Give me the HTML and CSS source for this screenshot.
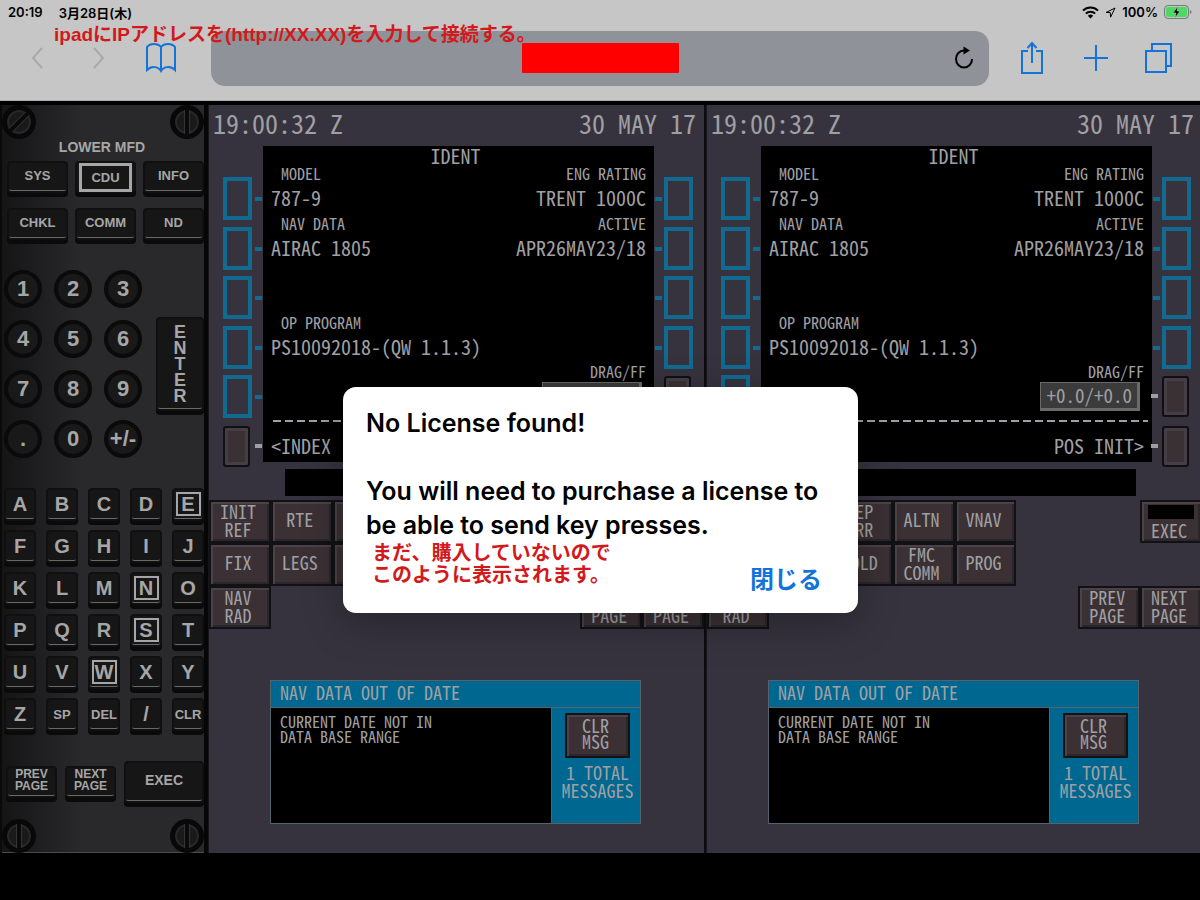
FILE: index.html
```html
<!DOCTYPE html>
<html lang="ja">
<head>
    <meta charset="UTF-8">
    <meta name="viewport" content="width=device-width, initial-scale=1.0">
    <title>CDU</title>
    <link rel="stylesheet" href="styles.css">
</head>
<body>

    <!-- Browser bar -->
    <header class="browser">
        <div class="status">
            <span>20:19</span>
            <span>3月28日(木)</span>
            <span class="status-right">
                <svg width="17" height="13" viewBox="0 0 17 13" fill="none" stroke="#000" stroke-width="2">
                    <path d="M1 4.6a10.6 10.6 0 0 1 15 0M3.8 7.6a6.6 6.6 0 0 1 9.4 0"/>
                    <path d="M8.500 12.500L5.800 9.800a3.800 3.800 0 0 1 5.400 0z" fill="#000" stroke="none"/>
                </svg>
                <svg width="11" height="11" viewBox="0 0 11 11" fill="none" stroke="#000" stroke-linejoin="round">
                    <path d="M10 1L1 5.500h4.200l.4 4.700z"/>
                </svg>
                <span>100%</span>
                <svg width="28" height="14" viewBox="0 0 28 14">
                    <rect x=".5" y=".5" width="24" height="13" rx="3.500" fill="none" stroke="#777"/>
                    <rect x="2" y="2" width="21" height="10" rx="2" fill="#4cd964"/>
                    <path d="M26 5v4q1.500-.5 1.500-2T26 5z" fill="#777"/>
                    <path d="M14 1L9 8h3l-1 5 5-7h-3z" fill="#000" stroke="#c6c6c6" stroke-width=".6"/>
                </svg>
            </span>
        </div>
        <div class="toolbar">
            <div class="tools tools-left">
                <button class="tool off" aria-label="戻る">
                    <svg width="14" height="24" viewBox="0 0 14 24"><path d="M12 2L3 12l9 10"/></svg>
                </button>
                <button class="tool off" aria-label="進む">
                    <svg width="14" height="24" viewBox="0 0 14 24"><path d="M2 2l9 10-9 10"/></svg>
                </button>
                <button class="tool" aria-label="ブックマーク">
                    <svg width="32" height="32" viewBox="0 0 32 32"><path d="M16 5C13 1 5 1 2 5v23c4-4 11-4 14 1 3-5 10-5 14-1V5C27 1 19 1 16 5z"/><path d="M16 5v24"/></svg>
                </button>
            </div>
            <div class="address">
                <input type="text" class="address-input" aria-label="アドレス">
                <span class="redacted"></span>
                <button class="reload" aria-label="再読み込み">
                    <svg width="20" height="24" viewBox="0 0 20 24"><path d="M18 13a8 8.500 0 1 1-8-8.500" fill="none" stroke="#000" stroke-width="2"/><path d="M9.500.5L16 4.600l-6.500 4z"/></svg>
                </button>
            </div>
            <div class="tools tools-right">
                <button class="tool" aria-label="共有">
                    <svg width="26" height="34" viewBox="0 0 26 34"><path d="M9 10H3v22h20V10h-6M13 22V2M8.500 7L13 2l4.500 5"/></svg>
                </button>
                <button class="tool" aria-label="新規タブ">
                    <svg width="26" height="26" viewBox="0 0 26 26"><path d="M13 0v26M1 13h24"/></svg>
                </button>
                <button class="tool" aria-label="タブ一覧">
                    <svg width="32" height="32" viewBox="0 0 32 32"><path d="M2 9h20v21H2zM8 9V2h19v22h-5"/></svg>
                </button>
            </div>
        </div>
        <p class="note note-top">ipadにIPアドレスを(http://XX.XX)を入力して接続する。</p>
    </header>

    <main class="deck">

        <!-- Keypad panel -->
        <section class="mfd">
            <div class="screws"><i class="screw tilt"></i><i class="screw"></i></div>
            <h2 class="mfd-title">LOWER MFD</h2>
            <div class="pages">
                <button class="key">SYS</button>
                <button class="key active"><span>CDU</span></button>
                <button class="key">INFO</button>
                <button class="key">CHKL</button>
                <button class="key">COMM</button>
                <button class="key">ND</button>
            </div>
            <div class="numbers">
                <div class="digits">
                    <button class="digit">1</button>
                    <button class="digit">2</button>
                    <button class="digit">3</button>
                    <button class="digit">4</button>
                    <button class="digit">5</button>
                    <button class="digit">6</button>
                    <button class="digit">7</button>
                    <button class="digit">8</button>
                    <button class="digit">9</button>
                    <button class="digit">.</button>
                    <button class="digit">0</button>
                    <button class="digit">+/-</button>
                </div>
                <button class="key enter">E<br>N<br>T<br>E<br>R</button>
            </div>
            <div class="letters">
                <button class="key">A</button>
                <button class="key">B</button>
                <button class="key">C</button>
                <button class="key">D</button>
                <button class="key boxed"><span>E</span></button>
                <button class="key">F</button>
                <button class="key">G</button>
                <button class="key">H</button>
                <button class="key">I</button>
                <button class="key">J</button>
                <button class="key">K</button>
                <button class="key">L</button>
                <button class="key">M</button>
                <button class="key boxed"><span>N</span></button>
                <button class="key">O</button>
                <button class="key">P</button>
                <button class="key">Q</button>
                <button class="key">R</button>
                <button class="key boxed"><span>S</span></button>
                <button class="key">T</button>
                <button class="key">U</button>
                <button class="key">V</button>
                <button class="key boxed"><span>W</span></button>
                <button class="key">X</button>
                <button class="key">Y</button>
                <button class="key">Z</button>
                <button class="key small">SP</button>
                <button class="key small">DEL</button>
                <button class="key">/</button>
                <button class="key small">CLR</button>
            </div>
            <div class="paging">
                <button class="key">PREV<br>PAGE</button>
                <button class="key">NEXT<br>PAGE</button>
                <button class="key exec">EXEC</button>
            </div>
            <div class="screws bottom"><i class="screw"></i><i class="screw"></i></div>
        </section>

        <!-- CDU, the second one is cloned from this -->
        <section class="cdu">
            <div class="clock"><span>19:00:32 Z</span><span>30 MAY 17</span></div>
            <div class="unit">
                <div class="lsks">
                    <button class="lsk" aria-label="L1"></button>
                    <button class="lsk" aria-label="L2"></button>
                    <button class="lsk" aria-label="L3"></button>
                    <button class="lsk" aria-label="L4"></button>
                    <button class="lsk" aria-label="L5"></button>
                    <button class="lsk on" aria-label="L6"></button>
                </div>
                <div class="screen">
                    <h3 class="screen-title">IDENT</h3>
                    <div class="lines">
                        <div class="line label"><span>MODEL</span><span>ENG RATING</span></div>
                        <div class="line"><span>787-9</span><span>TRENT 1000C</span></div>
                        <div class="line label"><span>NAV DATA</span><span>ACTIVE</span></div>
                        <div class="line"><span>AIRAC 1805</span><span>APR26MAY23/18</span></div>
                        <div class="line"></div>
                        <div class="line"></div>
                        <div class="line label"><span>OP PROGRAM</span></div>
                        <div class="line"><span>PS10092018-(QW 1.1.3)</span></div>
                        <div class="line label"><span></span><span>DRAG/FF</span></div>
                        <div class="line"><span></span><span class="field">+0.0/+0.0</span></div>
                        <div class="line"><hr class="dashes"></div>
                        <div class="line"><span>&lt;INDEX</span><span>POS INIT&gt;</span></div>
                    </div>
                </div>
                <div class="lsks right">
                    <button class="lsk" aria-label="R1"></button>
                    <button class="lsk" aria-label="R2"></button>
                    <button class="lsk" aria-label="R3"></button>
                    <button class="lsk" aria-label="R4"></button>
                    <button class="lsk on" aria-label="R5"></button>
                    <button class="lsk on" aria-label="R6"></button>
                </div>
            </div>
            <div class="scratchpad"></div>
            <div class="soft-keys">
                <button class="soft">INIT<br>REF</button>
                <button class="soft">RTE</button>
                <button class="soft">DEP<br>ARR</button>
                <button class="soft">ALTN</button>
                <button class="soft">VNAV</button>
                <button class="soft soft-exec"><i class="lamp"></i>EXEC</button>
                <button class="soft first">FIX</button>
                <button class="soft">LEGS</button>
                <button class="soft">HOLD</button>
                <button class="soft">FMC<br>COMM</button>
                <button class="soft">PROG</button>
                <button class="soft first">NAV<br>RAD</button>
                <button class="soft prev">PREV<br>PAGE</button>
                <button class="soft">NEXT<br>PAGE</button>
            </div>
            <div class="message">
                <h4 class="message-title">NAV DATA OUT OF DATE</h4>
                <p class="message-text">CURRENT DATE NOT IN<br>DATA BASE RANGE</p>
                <div class="message-side">
                    <button class="soft clr">CLR<br>MSG</button>
                    <p>1 TOTAL<br>MESSAGES</p>
                </div>
            </div>
        </section>

    </main>

    <div class="alert" role="alertdialog" aria-label="No License found!">
        <p class="alert-text">No License found!</p>
        <p class="alert-text">You will need to purchase a license to be able to send key presses.</p>
        <p class="note note-alert">まだ、購入していないので<br>このように表示されます。</p>
        <button class="alert-close">閉じる</button>
    </div>

    <script>
        const cdu = document.querySelector('.cdu');
        cdu.after(cdu.cloneNode(true));

        const closeButton = document.querySelector('.alert-close');
        closeButton.addEventListener('click', () => {
            closeButton.parentElement.remove();
        });
    </script>

</body>
</html>
```

FILE: styles.css
```css
* {
    margin: 0;
    padding: 0;
    box-sizing: border-box;
}

body {
    position: relative;
    min-height: 100vh;
    background-color: #000;
    font-family: Inter, "Noto Sans CJK JP", sans-serif;
    overflow-x: hidden;
}

button {
    border: none;
    background: none;
    color: inherit;
    font: inherit;
    cursor: pointer;
}

/* Browser bar */
.browser {
    position: relative;
    height: 101px;
    background-color: #c6c6c6;
    border-bottom: 1px solid #a8acac;
}

.status {
    display: flex;
    align-items: center;
    gap: 16px;
    height: 24px;
    padding: 0 8px;
    font-size: 13px;
    font-weight: 600;
}

.status-right {
    display: flex;
    align-items: center;
    gap: 6px;
    margin-left: auto;
}

.toolbar {
    display: flex;
    align-items: center;
    height: 68px;
    padding: 0 8px 0 6px;
}

.tools {
    display: flex;
}

.tools-left {
    margin-right: 19px;
}

.tools-right {
    margin-left: 11px;
}

.tool {
    display: flex;
    justify-content: center;
    align-items: center;
    width: 62px;
    height: 44px;
    fill: none;
    stroke: #1273d8;
    stroke-width: 2;
}

.tools-right .tool {
    width: 64px;
}

.tool.off {
    stroke: #a9a9ab;
}

.address {
    position: relative;
    display: flex;
    align-items: center;
    flex: 1;
    height: 55px;
    padding-right: 15px;
    border-radius: 14px;
    background-color: #8f9299;
}

.address-input {
    flex: 1;
    min-width: 0;
    height: 40px;
    border: none;
    outline: none;
    background: transparent;
}

.redacted {
    position: absolute;
    left: 40%;
    width: 157px;
    height: 30px;
    border-radius: 1px;
    background-color: #f00;
}

.reload {
    display: flex;
}

.note {
    color: #d2191b;
    font-family: "Liberation Sans", "Noto Sans CJK JP", sans-serif;
    font-weight: 700;
}

.note-top {
    position: absolute;
    top: 22px;
    left: 54px;
    font-size: 19px;
    line-height: 26px;
    white-space: nowrap;
}

/* Flight deck */
.deck {
    display: grid;
    grid-template-columns: 208px 1fr 1fr;
    height: 752px;
    margin-right: -4px;
    padding-top: 4px;
}

.mfd {
    display: flex;
    flex-direction: column;
    padding: 0 2px 0 6px;
    border-right: 4px solid #060606;
    border-left: 2px solid #0a0a0b;
    background: linear-gradient(90deg, #151516, #29282b 40%, #29282b);
    color: #a6a6a6;
    font-family: "Liberation Sans", sans-serif;
    font-weight: 700;
}

.screws {
    display: flex;
    justify-content: space-between;
    height: 34px;
    margin: 0 -2px 0 -6px;
}

.screw {
    display: flex;
    justify-content: center;
    width: 34px;
    height: 34px;
    border: 5px solid #080808;
    border-radius: 50%;
    background-color: #1a1a1b;
    box-shadow: inset 0 0 0 2px #28282a;
}

.screw::before {
    content: "";
    width: 4px;
    height: 24px;
    border-right: 1px solid #343436;
    border-left: 1px solid #343436;
    background-color: #0a0a0a;
}

.screw.tilt::before {
    transform: rotate(45deg);
}

.mfd-title {
    height: 18px;
    padding-right: 6px;
    font-size: 14px;
    line-height: 16px;
    text-align: center;
}

.key {
    border-bottom: 1px solid #6c6866;
    border-radius: 2px;
    background-color: #161617;
    box-shadow: 0 0 0 2px #101011, 0 4px 0 2px #0a0a0a;
    line-height: 1;
}

.pages {
    display: grid;
    grid-template-columns: repeat(3, 1fr);
    grid-auto-rows: 28px;
    gap: 19px 11px;
    padding: 6px 0 0 1px;
    font-size: 13px;
}

.pages .key {
    padding-bottom: 2px;
}

.pages .active {
    padding: 0;
    border-bottom: none;
}

.active span {
    display: block;
    margin: 0 2px;
    padding: 5px 0;
    border: 3px solid #a6a6a6;
}

.numbers {
    display: flex;
    justify-content: space-between;
    align-items: center;
    padding-top: 32px;
}

.digits {
    display: grid;
    grid-template-columns: repeat(3, 38px);
    gap: 12px;
    margin-left: -4px;
    font-size: 22px;
}

.digit {
    display: flex;
    justify-content: center;
    align-items: center;
    height: 38px;
    border: 4px solid #0a0a0a;
    border-radius: 50%;
    background-color: #191919;
    line-height: 1;
    white-space: nowrap;
}

.enter {
    width: 44px;
    height: 90px;
    font-size: 18px;
    line-height: 16px;
}

.letters {
    display: grid;
    grid-template-columns: repeat(5, 28px);
    grid-auto-rows: 29px;
    justify-content: space-between;
    row-gap: 13px;
    margin-left: -2px;
    padding-top: 32px;
    font-size: 20px;
}

.boxed span {
    display: block;
    width: 25px;
    margin: 0 auto;
    border: 2px solid #a6a6a6;
}

.key.small {
    font-size: 13px;
}

.paging {
    display: grid;
    grid-template-columns: 47px 47px 1fr;
    align-items: center;
    gap: 12px;
    margin-top: 34px;
    font-size: 12px;
}

.paging .key {
    height: 28px;
    padding-bottom: 3px;
    line-height: 12px;
}

.paging .exec {
    height: 38px;
    font-size: 14px;
}

.bottom {
    margin-top: auto;
    border-bottom: 1px solid #4a4a4a;
}

/* CDU */
.cdu {
    border-right: 2px solid #0c0c10;
    border-left: 1px solid #17161b;
    background-color: #36333e;
    color: #a0a0a4;
    font-family: "Noto Sans CJK JP", sans-serif;
    font-feature-settings: "hwid";
}

.clock {
    display: flex;
    justify-content: space-between;
    height: 41px;
    padding: 0 8px 0 4px;
    font-size: 26px;
    line-height: 36px;
}

.unit {
    display: grid;
    grid-template-columns: 54px 1fr 50px;
}

.lsks {
    display: grid;
    grid-template-rows: repeat(6, 1fr);
    align-items: center;
    height: 297px;
    margin: 28px 0 -9px;
}

.lsk {
    position: relative;
    width: 29px;
    height: 43px;
    margin-left: 14px;
    border: 4px solid #126a91;
}

.right .lsk {
    margin-left: 10px;
}

/* tick between the key and the screen */
.lsk::after {
    content: "";
    position: absolute;
    top: 16px;
    right: -14px;
    width: 7px;
    height: 4px;
    background-color: #126a91;
}

.right .lsk::after {
    right: auto;
    left: -13px;
}

.lsk.on {
    width: 27px;
    height: 41px;
    border: 2px solid #101014;
    border-radius: 3px;
    background-color: #3a3135;
    box-shadow: inset 0 0 0 3px #453e44;
}

.lsk.on::after {
    background-color: #a0a0a4;
}

.screen {
    height: 316px;
    padding: 0 8px;
    background-color: #000;
}

.screen-title {
    height: 15px;
    padding-right: 6px;
    font-size: 20px;
    font-weight: 400;
    line-height: 20px;
    text-align: center;
}

.lines {
    display: grid;
    grid-template-rows: repeat(12, minmax(0, 1fr));
    height: 297px;
    font-size: 20px;
    line-height: 24px;
}

.line {
    display: flex;
    justify-content: space-between;
    align-items: center;
    white-space: nowrap;
}

.label {
    padding-left: 10px;
    font-size: 16px;
}

.field {
    margin-right: 4px;
    padding: 0 5px 1px;
    border: solid #6a6a6a;
    border-width: 1px 3px 3px 1px;
    background-color: #3b3b3b;
    font-size: 19px;
}

.dashes {
    flex: 1;
    height: 2px;
    margin: 0 -4px 0 2px;
    border: none;
    background: repeating-linear-gradient(90deg, #a0a0a4 0 8px, transparent 8px 12px);
}

.scratchpad {
    height: 27px;
    margin: 7px 66px 4px 76px;
    background-color: #000;
}

.soft-keys {
    display: grid;
    grid-template-columns: repeat(8, 1fr);
    grid-auto-rows: 43px;
    font-size: 18px;
    line-height: 18px;
}

.soft {
    padding: 0 4px 6px 0;
    border: 2px solid #121115;
    background-color: #3b3135;
    box-shadow: inset 2px 2px 0 #4a4247, inset -2px -2px 0 #2a262a;
}

.first {
    grid-column: 1;
}

.soft-exec,
.prev + .soft {
    grid-column: 8;
}

.prev {
    grid-column: 7;
}

.soft-exec {
    padding: 0 4px 2px 0;
}

.lamp {
    display: block;
    height: 14px;
    margin: 2px 2px 2px 6px;
    background-color: #000;
}

.message {
    display: grid;
    grid-template-columns: 1fr 88px;
    grid-template-rows: 27px 115px;
    margin: 51px 63px 0 61px;
    border: 1px solid #53626c;
    background-color: #006890;
}

.message-title {
    grid-column: span 2;
    padding-left: 9px;
    border-bottom: 1px solid #53626c;
    font-size: 18px;
    font-weight: 400;
    line-height: 22px;
}

.message-text {
    padding: 6px 9px;
    border-right: 1px solid #53626c;
    background-color: #000;
    font-size: 16px;
    line-height: 15px;
}

.message-side {
    padding: 5px 0 0 3px;
    font-size: 18px;
    line-height: 18px;
    text-align: center;
}

.clr {
    display: block;
    width: 65px;
    height: 45px;
    margin: 0 auto 5px;
    line-height: 16px;
}

/* License alert */
.alert {
    position: absolute;
    top: 387px;
    left: 50%;
    width: 515px;
    margin-left: -257px;
    padding: 19px 23px 16px;
    border-radius: 13px;
    background-color: #fff;
    box-shadow: 0 10px 40px rgba(0, 0, 0, 0.3);
}

.alert-text {
    margin-bottom: 34px;
    font-size: 25px;
    font-weight: 600;
    line-height: 34px;
}

.alert-text + .alert-text {
    margin-bottom: 0;
}

.note-alert {
    padding-left: 6px;
    font-size: 20px;
    line-height: 22px;
}

.alert-close {
    display: block;
    margin: -23px 13px 0 auto;
    color: #1273d8;
    font-size: 24px;
    font-weight: 700;
    line-height: 34px;
}
```
